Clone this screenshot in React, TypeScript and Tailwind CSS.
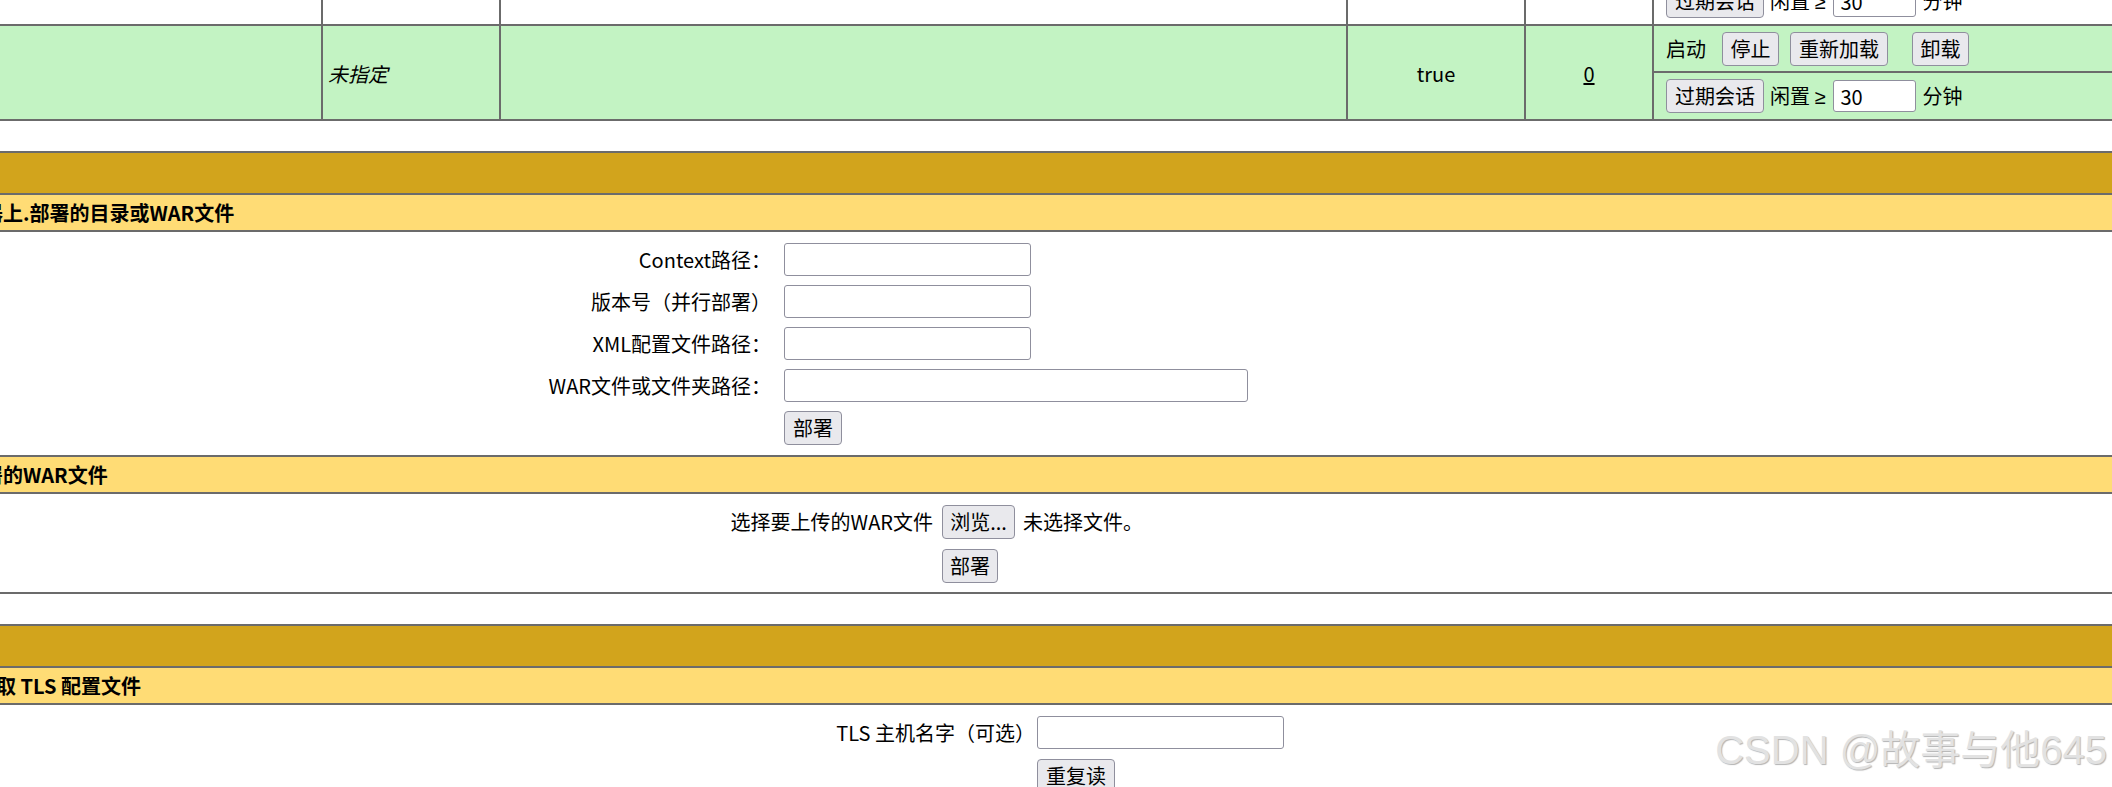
import type { ReactNode } from "react";

const LINE = "border-[#6b6b6b]";

function Btn({ children, className = "" }: { children: ReactNode; className?: string }) {
  return (
    <button
      type="button"
      className={`h-[34px] px-[8px] bg-[#e9e9ed] border border-[#8f8f9d] rounded-[4px] text-[20px] leading-[24px] text-black whitespace-nowrap flex items-center justify-center ${className}`}
    >
      {children}
    </button>
  );
}

function TextInput({ className = "", value }: { className?: string; value?: string }) {
  return (
    <input
      type="text"
      defaultValue={value}
      className={`bg-white border border-[#8f8f9d] rounded-[3px] px-[6px] text-[20px] text-black outline-none ${className}`}
    />
  );
}

// expire sessions line of the commands column
function ExpireRow() {
  return (
    <div className="h-[46px] flex items-center pl-[12px] whitespace-nowrap">
      <Btn className="w-[98px]">过期会话</Btn>
      <span className="ml-[6px]">
        闲置 <span className="font-['Liberation_Sans',sans-serif]">≥</span>
      </span>
      <TextInput className="ml-[8px] w-[83px] h-[32px]" value="30" />
      <span className="ml-[6px]">分钟</span>
    </div>
  );
}

function SectionTitle({ text, shift }: { text: string; shift: string }) {
  return (
    <>
      <div className={`h-[42px] bg-[#d2a41c] border-b-2 ${LINE}`} />
      <SubTitle text={text} shift={shift} />
    </>
  );
}

function SubTitle({ text, shift }: { text: string; shift: string }) {
  return (
    <div className={`h-[37px] bg-[#ffdc75] border-b-2 ${LINE} flex items-center overflow-hidden`}>
      <span className={`font-bold whitespace-nowrap ${shift}`}>{text}</span>
    </div>
  );
}

export default function App() {
  return (
    <div className="relative w-[2112px] h-[787px] overflow-hidden bg-white text-black text-[20px] leading-[24px] font-['Noto_Sans_CJK_SC',sans-serif]">
      {/* applications list (scrolled) */}
      <div className="grid grid-cols-[321px_176px_845px_176px_126px_1fr] gap-[2px] bg-[#6b6b6b] pb-[2px]">
        {/* tail of previous application row */}
        <div className="h-[24px] bg-white" />
        <div className="h-[24px] bg-white" />
        <div className="h-[24px] bg-white" />
        <div className="h-[24px] bg-white" />
        <div className="h-[24px] bg-white" />
        <div className="h-[24px] bg-white overflow-hidden">
          <div className="-mt-[22px]">
            <ExpireRow />
          </div>
        </div>

        {/* highlighted application row */}
        <div className="row-span-2 bg-[#c3f3c3]" />
        <div className="row-span-2 bg-[#c3f3c3] flex items-center pl-[5px] pt-[2px]">
          <span className="italic">未指定</span>
        </div>
        <div className="row-span-2 bg-[#c3f3c3]" />
        <div className="row-span-2 bg-[#c3f3c3] flex items-center justify-center pt-[2px]">true</div>
        <div className="row-span-2 bg-[#c3f3c3] flex items-center justify-center pt-[2px]">
          <span className="underline">0</span>
        </div>
        <div className="h-[45px] bg-[#c3f3c3] flex items-center pl-[12px] whitespace-nowrap">
          <span>启动</span>
          <Btn className="ml-[16px] w-[57px]">停止</Btn>
          <Btn className="ml-[11px] w-[98px]">重新加载</Btn>
          <Btn className="ml-[24px] w-[57px]">卸载</Btn>
        </div>
        <div className="bg-[#c3f3c3]">
          <ExpireRow />
        </div>
      </div>

      <div className="h-[30px]" />

      {/* deploy */}
      <div className={`border-y-2 ${LINE}`}>
        <SectionTitle text="服务器上.部署的目录或WAR文件" shift="-ml-[57px]" />
        <div className={`pt-[11px] pb-[10px] border-b-2 ${LINE}`}>
          <div className="grid grid-cols-[771px_auto] gap-x-[13px] gap-y-[9px] justify-start">
            <div className="flex items-center justify-end">Context路径：</div>
            <TextInput className="w-[247px] h-[33px]" />
            <div className="flex items-center justify-end">版本号（并行部署）</div>
            <TextInput className="w-[247px] h-[33px]" />
            <div className="flex items-center justify-end">XML配置文件路径：</div>
            <TextInput className="w-[247px] h-[33px]" />
            <div className="flex items-center justify-end">WAR文件或文件夹路径：</div>
            <TextInput className="w-[464px] h-[33px]" />
            <div />
            <div className="flex">
              <Btn className="w-[58px]">部署</Btn>
            </div>
          </div>
        </div>
        <SubTitle text="上传要部署的WAR文件" shift="-ml-[97px]" />
        <div className="pt-[11px] pb-[9px]">
          <div className="grid grid-cols-[933px_auto] gap-x-[9px] gap-y-[10px] justify-start">
            <div className="flex items-center justify-end">选择要上传的WAR文件</div>
            <div className="flex items-center whitespace-nowrap">
              <Btn className="w-[73px] px-0">浏览...</Btn>
              <span className="ml-[8px]">未选择文件。</span>
            </div>
            <div />
            <div className="flex">
              <Btn className="w-[56px]">部署</Btn>
            </div>
          </div>
        </div>
      </div>

      <div className="h-[30px]" />

      {/* TLS */}
      <div className={`border-t-2 ${LINE}`}>
        <SectionTitle text="重新读取 TLS 配置文件" shift="-ml-[64px]" />
        <div className="pt-[11px]">
          <div className="grid grid-cols-[1035px_auto] gap-x-[2px] gap-y-[10px] justify-start">
            <div className="flex items-center justify-end">TLS 主机名字（可选）</div>
            <TextInput className="w-[247px] h-[33px]" />
            <div />
            <div className="flex">
              <Btn className="w-[78px]">重复读</Btn>
            </div>
          </div>
        </div>
      </div>

      {/* watermark */}
      <div className="absolute right-[5px] top-[730px] text-[40px] leading-[40px] whitespace-nowrap text-[#e2e2e2] font-['Liberation_Sans','Noto_Sans_CJK_SC',sans-serif] [text-shadow:1px_1px_1px_rgba(0,0,0,0.3)]">
        CSDN @故事与他645
      </div>
    </div>
  );
}
